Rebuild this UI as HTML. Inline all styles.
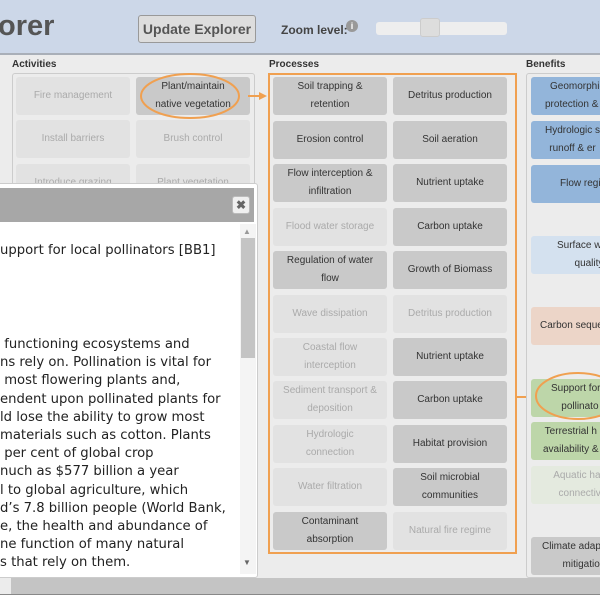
<!DOCTYPE html>
<html><head><style>
*{box-sizing:border-box;margin:0;padding:0}
body{width:600px;height:600px;overflow:hidden;background:#ececec;font-family:"Liberation Sans",sans-serif;position:relative}
.hdr{position:absolute;left:0;top:0;width:600px;height:55px;background:#ccd7e8;border-bottom:2px solid #a9afb8}
.title{position:absolute;left:-2px;top:10px;font-size:29px;font-weight:bold;color:#555}
.upd{position:absolute;left:138px;top:15px;width:118px;height:28px;background:#ddd;border:1px solid #999;border-radius:3px;font-size:14px;font-weight:bold;color:#555;text-align:center;line-height:26px}
.zl{position:absolute;left:281px;top:23px;font-size:12px;font-weight:bold;color:#444}
.info{position:absolute;left:346px;top:20px;width:12px;height:12px;border-radius:50%;background:#999;color:#fff;font-size:9px;text-align:center;line-height:12px;font-weight:bold}
.slider{position:absolute;left:376px;top:22px;width:131px;height:13px;background:#eee;border-radius:3px}
.thumb{position:absolute;left:420px;top:18px;width:20px;height:19px;background:#ddd;border:1px solid #ccc;border-radius:3px}
.lbl{position:absolute;top:59px;font-size:10px;font-weight:bold;color:#333}
.panel{position:absolute;border:1px solid #ccc;border-radius:3px;background:#ececec}
.b{position:absolute;width:114px;height:38px;border-radius:3px;font-size:10px;text-align:center;display:flex;align-items:center;justify-content:center;line-height:18px;color:#333;background:#c9c9c9}
.f{background:#e2e2e2;color:#aaa}
.dlg{position:absolute;left:-5px;top:183px;width:263px;height:395px;background:#fff;border:1px solid #ccc;border-radius:3px}
.dh{position:absolute;left:4px;top:4px;width:254px;height:34px;background:#a7a7a7}
.x{position:absolute;left:232px;top:196px;width:18px;height:18px;background:#f0f0f0;border:1px solid #bbb;border-radius:3px;font-size:12px;font-weight:bold;color:#666;text-align:center;line-height:16px}
.txt{position:absolute;left:0;font-family:"DejaVu Sans",sans-serif;font-size:13.2px;color:#222;white-space:nowrap}
</style></head><body>
<div class="hdr"></div>
<div class="title">orer</div>
<div class="upd">Update Explorer</div>
<div class="zl">Zoom level:</div><div class="info">i</div>
<div class="slider"></div><div class="thumb"></div>
<div class="lbl" style="left:12px">Activities</div>
<div class="lbl" style="left:269px">Processes</div>
<div class="lbl" style="left:526px">Benefits</div>
<div class="panel" style="left:12px;top:73px;width:243px;height:120px"></div>
<div class="b f" style="left:16px;top:77px">Fire management</div>
<div class="b" style="left:136px;top:77px">Plant/maintain<br>native vegetation</div>
<div class="b f" style="left:16px;top:120px">Install barriers</div>
<div class="b f" style="left:136px;top:120px">Brush control</div>
<div class="b f" style="left:16px;top:164px">Introduce grazing</div>
<div class="b f" style="left:136px;top:164px">Plant vegetation</div>
<svg style="position:absolute;left:0;top:0" width="600" height="600">
<ellipse cx="190" cy="96" rx="49" ry="22" fill="none" stroke="#f0a050" stroke-width="2"/>
<line x1="248" y1="96" x2="262" y2="96" stroke="#f0a050" stroke-width="2"/><path d="M259 92 L267 96 L259 100Z" fill="#f0a050"/>
<line x1="517" y1="397" x2="528" y2="397" stroke="#f0a050" stroke-width="2"/><path d="M526 393 L533 397 L526 401Z" fill="#f0a050"/>
</svg>
<div class="panel" style="left:268px;top:73px;width:249px;height:481px;border:2px solid #f0a050;border-radius:0"></div>
<div class="b" style="left:273px;top:77px">Soil trapping &amp;<br>retention</div>
<div class="b" style="left:393px;top:77px">Detritus production</div>
<div class="b" style="left:273px;top:121px">Erosion control</div>
<div class="b" style="left:393px;top:121px">Soil aeration</div>
<div class="b" style="left:273px;top:164px">Flow interception &amp;<br>infiltration</div>
<div class="b" style="left:393px;top:164px">Nutrient uptake</div>
<div class="b f" style="left:273px;top:208px">Flood water storage</div>
<div class="b" style="left:393px;top:208px">Carbon uptake</div>
<div class="b" style="left:273px;top:251px">Regulation of water<br>flow</div>
<div class="b" style="left:393px;top:251px">Growth of Biomass</div>
<div class="b f" style="left:273px;top:295px">Wave dissipation</div>
<div class="b f" style="left:393px;top:295px">Detritus production</div>
<div class="b f" style="left:273px;top:338px">Coastal flow<br>interception</div>
<div class="b" style="left:393px;top:338px">Nutrient uptake</div>
<div class="b f" style="left:273px;top:381px">Sediment transport &amp;<br>deposition</div>
<div class="b" style="left:393px;top:381px">Carbon uptake</div>
<div class="b f" style="left:273px;top:425px">Hydrologic<br>connection</div>
<div class="b" style="left:393px;top:425px">Habitat provision</div>
<div class="b f" style="left:273px;top:468px">Water filtration</div>
<div class="b" style="left:393px;top:468px">Soil microbial<br>communities</div>
<div class="b" style="left:273px;top:512px">Contaminant<br>absorption</div>
<div class="b f" style="left:393px;top:512px">Natural fire regime</div>
<div class="panel" style="left:526px;top:73px;width:80px;height:505px"></div>
<div class="b" style="left:531px;top:77px;background:#93b5da;justify-content:flex-start;padding-left:14px;white-space:nowrap">Geomorphic<br>protection &amp; m</div>
<div class="b" style="left:531px;top:121px;background:#93b5da;justify-content:flex-start;padding-left:14px;white-space:nowrap">Hydrologic s<br>runoff &amp; er</div>
<div class="b" style="left:531px;top:165px;background:#93b5da;justify-content:flex-start;padding-left:29px">Flow regi</div>
<div class="b" style="left:531px;top:236px;background:#d4e1ef;justify-content:flex-start;padding-left:26px;white-space:nowrap">Surface wa<br>&nbsp;&nbsp;&nbsp;&nbsp;&nbsp;quality</div>
<div class="b" style="left:531px;top:307px;background:#ecd5c8;justify-content:flex-start;padding-left:9px;white-space:nowrap">Carbon seque</div>
<div class="b" style="left:531px;top:379px;background:#bdd6a9;justify-content:flex-start;padding-left:20px;white-space:nowrap">Support for<br>&nbsp;&nbsp;&nbsp;pollinato</div>
<div class="b" style="left:531px;top:422px;background:#bdd6a9;justify-content:flex-start;padding-left:12px;white-space:nowrap">Terrestrial h<br>availability &amp;</div>
<div class="b" style="left:531px;top:466px;background:#e4eadf;color:#aaa;justify-content:flex-start;padding-left:22px;white-space:nowrap">Aquatic ha<br>&nbsp;&nbsp;connectiv</div>
<div class="b" style="left:531px;top:537px;justify-content:flex-start;padding-left:11px;white-space:nowrap">Climate adapt<br>&nbsp;&nbsp;&nbsp;&nbsp;&nbsp;&nbsp;mitigatio</div>
<svg style="position:absolute;left:0;top:0" width="600" height="600"><ellipse cx="578" cy="396" rx="42" ry="23" fill="none" stroke="#f0a050" stroke-width="2"/></svg>
<div style="position:absolute;left:0;top:578px;width:600px;height:16px;background:#c4c4c4"></div>
<div style="position:absolute;left:0;top:578px;width:11px;height:16px;background:#ececec"></div>
<div style="position:absolute;left:0;top:594px;width:600px;height:6px;background:#fff;border-top:1px solid #888"></div>
<div class="dlg"><div class="dh"></div></div>
<div class="x">✖</div>
<div style="position:absolute;left:240px;top:224px;width:16px;height:350px;background:#f4f4f4"></div>
<div style="position:absolute;left:241px;top:238px;width:14px;height:120px;background:#c4c4c4"></div>
<div style="position:absolute;left:243px;top:227px;color:#999;font-size:8px">▲</div>
<div style="position:absolute;left:243px;top:558px;color:#666;font-size:8px">▼</div>
<div class="txt" style="top:243px">upport for local pollinators [BB1]</div>
<div class="txt" style="top:336px;line-height:18.2px">&nbsp;functioning ecosystems and<br>ns rely on. Pollination is vital for<br>&nbsp;most flowering plants and,<br>endent upon pollinated plants for<br>ld lose the ability to grow most<br>materials such as cotton. Plants<br>&nbsp;per cent of global crop<br>nuch as $577 billion a year<br>l to global agriculture, which<br>d’s 7.8 billion people (World Bank,<br>e, the health and abundance of<br>ne function of many natural<br>s that rely on them.</div>
</body></html>
